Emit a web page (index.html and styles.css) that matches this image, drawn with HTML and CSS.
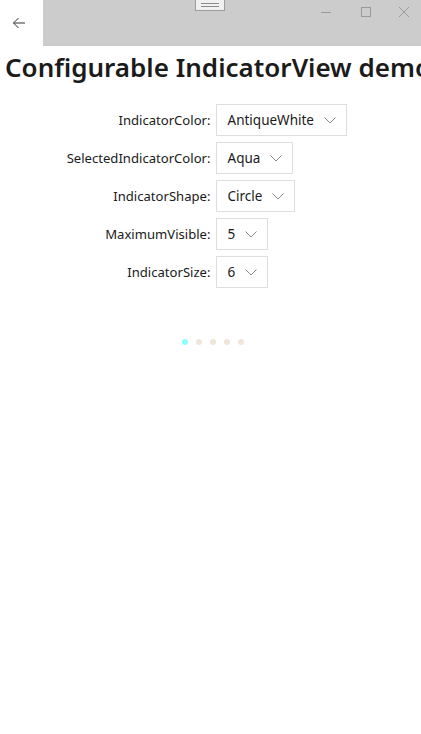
FILE: index.html
```html
<!DOCTYPE html>
<html>
<head>
<meta charset="utf-8">
<link rel="stylesheet" href="styles.css">
</head>
<body>
<div class="titlebar">
  <div class="back">
    <svg width="14" height="12" viewBox="0 0 14 12"><path d="M13 6H1.5M6.5 1L1.5 6l5 5" fill="none" stroke="#333" stroke-width="1"/></svg>
  </div>
  <div class="caption">
    <div class="handle"><span></span><span></span></div>
    <div class="cbtn"><svg width="12" height="12" viewBox="0 0 12 12"><path d="M1 6.5h10" stroke="#9a9a9a" stroke-width="1"/></svg></div>
    <div class="cbtn"><svg width="12" height="12" viewBox="0 0 12 12"><rect x="1.5" y="1.5" width="9" height="9" fill="none" stroke="#9a9a9a" stroke-width="1"/></svg></div>
    <div class="cbtn close"><svg width="12" height="12" viewBox="0 0 12 12"><path d="M1 1l10 10M11 1L1 11" stroke="#9a9a9a" stroke-width="1"/></svg></div>
  </div>
</div>
<h1 class="title">Configurable IndicatorView demo</h1>
<div class="form">
  <div class="label">IndicatorColor:</div>
  <div class="cell"><div class="combo"><span>AntiqueWhite</span><svg class="chev" width="12" height="7" viewBox="0 0 12 7"><path d="M0.5 0.5l5.5 5.5 5.5-5.5" fill="none" stroke="#8a8a8a" stroke-width="1"/></svg></div></div>
  <div class="label">SelectedIndicatorColor:</div>
  <div class="cell"><div class="combo"><span>Aqua</span><svg class="chev" width="12" height="7" viewBox="0 0 12 7"><path d="M0.5 0.5l5.5 5.5 5.5-5.5" fill="none" stroke="#8a8a8a" stroke-width="1"/></svg></div></div>
  <div class="label">IndicatorShape:</div>
  <div class="cell"><div class="combo"><span>Circle</span><svg class="chev" width="12" height="7" viewBox="0 0 12 7"><path d="M0.5 0.5l5.5 5.5 5.5-5.5" fill="none" stroke="#8a8a8a" stroke-width="1"/></svg></div></div>
  <div class="label">MaximumVisible:</div>
  <div class="cell"><div class="combo"><span>5</span><svg class="chev" width="12" height="7" viewBox="0 0 12 7"><path d="M0.5 0.5l5.5 5.5 5.5-5.5" fill="none" stroke="#8a8a8a" stroke-width="1"/></svg></div></div>
  <div class="label">IndicatorSize:</div>
  <div class="cell"><div class="combo"><span>6</span><svg class="chev" width="12" height="7" viewBox="0 0 12 7"><path d="M0.5 0.5l5.5 5.5 5.5-5.5" fill="none" stroke="#8a8a8a" stroke-width="1"/></svg></div></div>
</div>
<div class="dots">
  <span class="dot sel"></span>
  <span class="dot"></span>
  <span class="dot"></span>
  <span class="dot"></span>
  <span class="dot"></span>
</div>
</body>
</html>
```
FILE: styles.css
```css
html, body {
  margin: 0;
  padding: 0;
  background: #ffffff;
  width: 421px;
  overflow: hidden;
}
body {
  font-family: "Noto Sans", "Open Sans", sans-serif;
  color: #1a1a1a;
}
.titlebar {
  display: flex;
  height: 46px;
}
.back {
  width: 43px;
  display: flex;
  align-items: center;
  justify-content: center;
  box-sizing: border-box;
  padding-right: 5px;
}
.back svg { display: block; }
.caption {
  flex: 1;
  background: #cccccc;
  display: flex;
  justify-content: flex-end;
  align-items: flex-start;
  position: relative;
}
.handle {
  position: absolute;
  left: 152px;
  top: -1px;
  width: 28px;
  height: 10px;
  background: #f0f0f0;
  border: 1px solid #9c9c9c;
  border-top: none;
  display: flex;
  flex-direction: column;
  justify-content: center;
  align-items: center;
  gap: 2px;
  padding-top: 1px;
}
.handle span {
  display: block;
  width: 18px;
  height: 1px;
  background: #8a8a8a;
}
.cbtn {
  width: 40px;
  height: 23px;
  display: flex;
  align-items: center;
  justify-content: center;
}
.cbtn svg { display: block; }
.cbtn.close { width: 35px; }
.title {
  margin: 4px 0 0 5px;
  font-size: 26px;
  line-height: 34px;
  font-weight: 600;
  letter-spacing: 0;
  white-space: nowrap;
  overflow: hidden;
  color: #1b1b1b;
}
.form {
  margin-top: 20px;
  display: grid;
  grid-template-columns: 1fr 1fr;
  row-gap: 6px;
}
.label {
  font-size: 13.1px;
  display: flex;
  align-items: center;
  justify-content: flex-end;
}
.cell {
  display: flex;
  padding-left: 5px;
}
.combo {
  height: 32px;
  box-sizing: border-box;
  border: 1px solid #dedede;
  background: #fff;
  display: flex;
  align-items: center;
  padding: 0 10px 0 11px;
  gap: 10px;
  font-size: 13.5px;
  min-width: 52px;
}
.chev { display: block; flex: none; }
.dots {
  margin-top: 51px;
  display: flex;
  justify-content: center;
  gap: 8px;
  padding-left: 5px;
}
.dot {
  width: 6px;
  height: 6px;
  border-radius: 50%;
  background: #efe6da;
}
.dot.sel { background: #8effff; }
```
